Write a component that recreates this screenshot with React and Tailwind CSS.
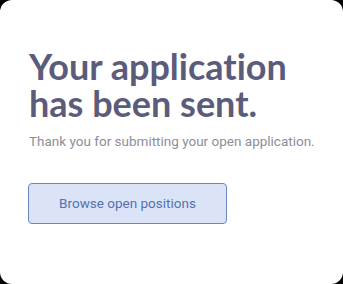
import React from 'react';

// Confirmation card shown after an open application is submitted
const App = () => {
  return (
    <div className="w-[343px] h-[284px] bg-black">
      <div className="flex flex-col items-start w-full h-full bg-white rounded-[12px] pl-[29px] pt-[48px]">
        <h1 className="font-['Lato',sans-serif] text-[36px] leading-[37px] font-bold text-[#5b5c7c] [font-variant-ligatures:none]">
          Your application
          <br />
          has been sent.
        </h1>
        <p className="mt-[9px] font-['Roboto',sans-serif] text-[13.5px] leading-[20px] text-[#8d8e99]">
          Thank you for submitting your open application.
        </p>
        <button className="mt-[32px] -ml-px w-[199px] h-[41px] bg-[#dbe4f6] border border-[#6a86bd] rounded-[4px] font-['Roboto',sans-serif] text-[13.5px] text-[#5471b0]">
          Browse open positions
        </button>
      </div>
    </div>
  );
};

export default App;
